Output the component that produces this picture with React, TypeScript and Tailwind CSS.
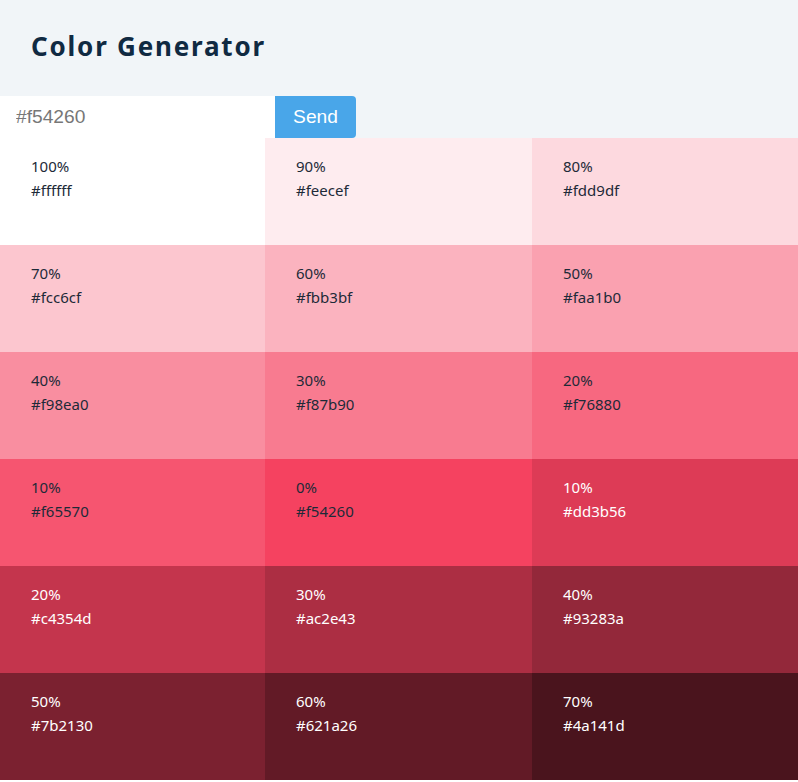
import { useState } from "react"

const colors = [
  { weight: "100%", hex: "#ffffff" },
  { weight: "90%", hex: "#feecef" },
  { weight: "80%", hex: "#fdd9df" },
  { weight: "70%", hex: "#fcc6cf" },
  { weight: "60%", hex: "#fbb3bf" },
  { weight: "50%", hex: "#faa1b0" },
  { weight: "40%", hex: "#f98ea0" },
  { weight: "30%", hex: "#f87b90" },
  { weight: "20%", hex: "#f76880" },
  { weight: "10%", hex: "#f65570" },
  { weight: "0%", hex: "#f54260" },
  { weight: "10%", hex: "#dd3b56" },
  { weight: "20%", hex: "#c4354d" },
  { weight: "30%", hex: "#ac2e43" },
  { weight: "40%", hex: "#93283a" },
  { weight: "50%", hex: "#7b2130" },
  { weight: "60%", hex: "#621a26" },
  { weight: "70%", hex: "#4a141d" },
]

function ColorCell({ weight, hex, index }: { weight: string; hex: string; index: number }) {
  const dark = index > 10
  return (
    <div
      className={`h-[107px] px-[31px] py-4 text-[15px] leading-6 ${dark ? "text-white" : "text-[#1d2a38]"}`}
      style={{ backgroundColor: hex }}
    >
      <p>{weight}</p>
      <p>{hex}</p>
    </div>
  )
}

export default function App() {
  const [color, setColor] = useState("")

  return (
    <main className="min-h-screen bg-white font-['Noto_Sans',sans-serif]">
      <section className="bg-[#f1f5f8]">
        <div className="px-[31px] pt-[25px] pb-[28px]">
          <h1 className="text-[26px] font-bold leading-[43px] tracking-[1.8px] text-[#102a42]">Color Generator</h1>
        </div>
        <form className="flex" onSubmit={(e) => e.preventDefault()}>
          <input
            type="text"
            value={color}
            onChange={(e) => setColor(e.target.value)}
            placeholder="#f54260"
            className="h-[42px] w-[275px] bg-white px-4 font-['Liberation_Sans',sans-serif] text-[19.2px] text-[#555] placeholder:text-[#777] outline-none"
          />
          <button
            type="submit"
            className="h-[42px] w-[81px] rounded-r-[4px] bg-[#49a6e9] font-['Liberation_Sans',sans-serif] text-[19.2px] text-white"
          >
            Send
          </button>
        </form>
      </section>
      <section className="grid grid-cols-[265px_267px_266px]">
        {colors.map((c, i) => (
          <ColorCell key={i} weight={c.weight} hex={c.hex} index={i} />
        ))}
      </section>
    </main>
  )
}
